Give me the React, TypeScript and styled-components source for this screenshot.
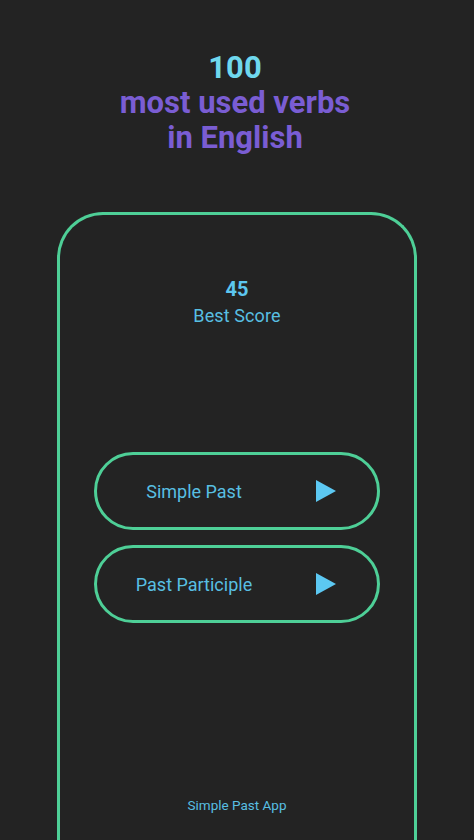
import React from "react";
import styled, { createGlobalStyle } from "styled-components";

const Global = createGlobalStyle`
  html, body {
    margin: 0;
    padding: 0;
    background: #232323;
    overflow: hidden;
  }
  body {
    font-family: Roboto, "Noto Sans", Arial, sans-serif;
  }
`;

const Page = styled.div`
  width: 474px;
  height: 840px;
  overflow: hidden;
  background: #232323;
  display: flex;
  flex-direction: column;
  align-items: center;
`;

const Header = styled.header`
  padding-top: 50px;
  padding-right: 4px;
  display: flex;
  flex-direction: column;
  align-items: center;
  font-weight: 700;
  font-size: 31px;
  line-height: 35px;
  text-align: center;
`;

const HeadLine = styled.div<{ $color: string }>`
  color: ${(p) => p.$color};
`;

const Card = styled.section`
  margin-top: 57px;
  width: 360px;
  height: 660px;
  box-sizing: border-box;
  border: 3px solid #4ecf97;
  border-bottom: none;
  border-radius: 46px 46px 0 0;
  display: flex;
  flex-direction: column;
  align-items: center;
  padding-top: 63px;
`;

const ScoreValue = styled.div`
  color: #5cc6ef;
  font-weight: 700;
  font-size: 20px;
  line-height: 22px;
`;

const ScoreLabel = styled.div`
  margin-top: 6px;
  color: #58bfe2;
  font-size: 18px;
  line-height: 20px;
  letter-spacing: 0.1px;
`;

const Buttons = styled.div`
  margin-top: 126px;
  display: flex;
  flex-direction: column;
  gap: 15px;
`;

const ModeButton = styled.button`
  width: 286px;
  height: 78px;
  box-sizing: border-box;
  border: 3px solid #4ecf97;
  border-radius: 39px;
  background: transparent;
  display: flex;
  align-items: center;
  padding: 0 41px 0 4px;
  gap: 29px;
  cursor: pointer;
  font-family: inherit;
`;

const ModeLabel = styled.span`
  flex: 1;
  text-align: center;
  color: #58bfe2;
  font-size: 18px;
  letter-spacing: 0px;
`;

const PlayIcon = styled.svg`
  width: 20px;
  height: 22px;
  flex-shrink: 0;
`;

const Footer = styled.div`
  margin-top: 174px;
  color: #58bfe2;
  font-size: 13.5px;
  line-height: 16px;
`;

const Play = () => (
  <PlayIcon viewBox="0 0 20 22">
    <polygon points="0,0 20,11 0,22" fill="#5cc8f2" />
  </PlayIcon>
);

export default function App() {
  return (
    <>
      <Global />
      <Page>
        <Header>
          <HeadLine $color="#6fd8ee">100</HeadLine>
          <HeadLine $color="#7a5dd3">most used verbs</HeadLine>
          <HeadLine $color="#7a5dd3">in English</HeadLine>
        </Header>
        <Card>
          <ScoreValue>45</ScoreValue>
          <ScoreLabel>Best Score</ScoreLabel>
          <Buttons>
            <ModeButton>
              <ModeLabel>Simple Past</ModeLabel>
              <Play />
            </ModeButton>
            <ModeButton>
              <ModeLabel>Past Participle</ModeLabel>
              <Play />
            </ModeButton>
          </Buttons>
          <Footer>Simple Past App</Footer>
        </Card>
      </Page>
    </>
  );
}
